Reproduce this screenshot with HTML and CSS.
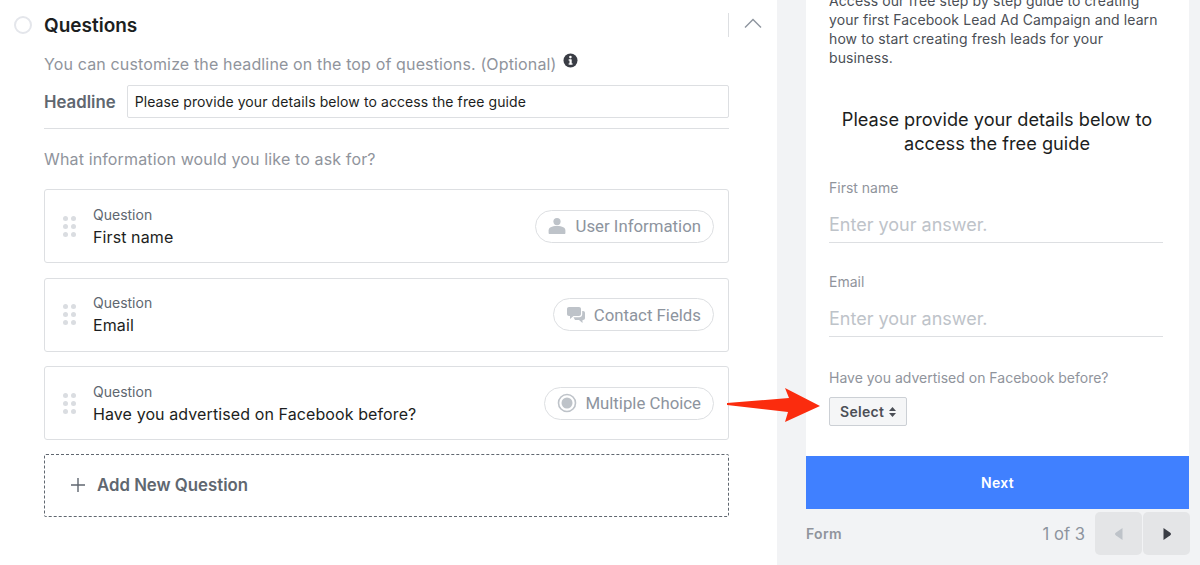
FILE: index.html
```html
<!DOCTYPE html>
<html lang="en">
<head>
    <meta charset="UTF-8">
    <meta name="viewport" content="width=device-width, initial-scale=1.0">
    <title>Lead Form - Questions</title>
    <link rel="stylesheet" href="styles.css">
</head>
<body>

<div class="page">
    <div class="editor">
        <div class="section-head">
            <span class="radio"></span>
            <h2>Questions</h2>
            <span class="head-rule"></span>
            <svg class="chevron" width="18" height="10" viewBox="0 0 18 10"><path d="M1 9.5 9 1.5l8 8" fill="none" stroke="#8d949e" stroke-width="1.4"/></svg>
        </div>

        <div class="section-body">
            <p class="hint hint-top">You can customize the headline on the top of questions. (Optional)
                <svg class="info" width="15" height="15" viewBox="0 0 15 15"><circle cx="7.5" cy="7.5" r="7" fill="#3a3d45"/><rect x="6.5" y="6.4" width="2.2" height="5" fill="#fff"/><rect x="5.6" y="6.4" width="2" height="1.2" fill="#fff"/><rect x="5.6" y="10.4" width="4" height="1.2" fill="#fff"/><circle cx="7.4" cy="4.1" r="1.3" fill="#fff"/></svg>
            </p>
            <div class="headline-row">
                <label for="headline">Headline</label>
                <input type="text" id="headline" value="Please provide your details below to access the free guide">
            </div>
            <p class="hint hint-ask">What information would you like to ask for?</p>

            <div class="question">
                <span class="grip"><i></i><i></i><i></i><i></i><i></i><i></i></span>
                <div class="question-text">
                    <span class="q-label">Question</span>
                    <span class="q-name">First name</span>
                </div>
                <span class="pill">
                    <svg width="20" height="18" viewBox="0 0 20 18"><circle cx="9" cy="4.6" r="3.6" fill="#bec3c9"/><path d="M.6 16v-2.6c0-2.6 3-4.4 8.4-4.4s8.4 1.8 8.4 4.4V16c0 .6-.4 1-1 1H1.6c-.6 0-1-.4-1-1z" fill="#bec3c9"/></svg>
                    User Information
                </span>
            </div>

            <div class="question">
                <span class="grip"><i></i><i></i><i></i><i></i><i></i><i></i></span>
                <div class="question-text">
                    <span class="q-label">Question</span>
                    <span class="q-name">Email</span>
                </div>
                <span class="pill">
                    <svg width="20" height="18" viewBox="0 0 20 18"><path d="M3 1h10c1.2 0 2 .8 2 2v5c0 1.2-.8 2-2 2H7.5L4 13v-3H3c-1.2 0-2-.8-2-2V3c0-1.2.8-2 2-2z" fill="#bec3c9"/><path d="M16.2 5H17c1.2 0 2 .8 2 2v5c0 1.2-.8 2-2 2h-.5v3l-3.5-3H9l-1.5-2.8h5.7c1.7 0 3-1.3 3-3z" fill="#bec3c9"/></svg>
                    Contact Fields
                </span>
            </div>

            <div class="question">
                <span class="grip"><i></i><i></i><i></i><i></i><i></i><i></i></span>
                <div class="question-text">
                    <span class="q-label">Question</span>
                    <span class="q-name">Have you advertised on Facebook before?</span>
                </div>
                <span class="pill">
                    <svg width="20" height="20" viewBox="0 0 20 20"><circle cx="10" cy="10" r="8.5" fill="none" stroke="#bec3c9" stroke-width="1.6"/><circle cx="10" cy="10" r="5.5" fill="#bec3c9"/></svg>
                    Multiple Choice
                </span>
            </div>

            <div class="add-question">
                <svg width="14" height="14" viewBox="0 0 14 14"><path d="M7 0v14M0 7h14" stroke="#606770" stroke-width="1.4"/></svg>
                <span>Add New Question</span>
            </div>
        </div>
    </div>

    <div class="preview">
        <div class="form-card">
            <p class="intro">Access our free step by step guide to creating your first Facebook Lead Ad Campaign and learn how to start creating fresh leads for your business.</p>
            <h3>Please provide your details below to access the free guide</h3>

            <div class="field">
                <span class="field-label">First name</span>
                <span class="field-input">Enter your answer.</span>
            </div>
            <div class="field">
                <span class="field-label">Email</span>
                <span class="field-input">Enter your answer.</span>
            </div>
            <div class="field field-select">
                <span class="field-label">Have you advertised on Facebook before?</span>
                <span class="select-btn">Select
                    <svg width="7" height="10" viewBox="0 0 7 10"><path d="M3.5 0 7 4H0zM3.5 10 0 6h7z" fill="#4b4f56"/></svg>
                </span>
            </div>
        </div>
        <div class="next-btn">Next</div>
        <div class="pager">
            <span class="pager-title">Form</span>
            <span class="pager-count">1 of 3</span>
            <span class="pager-btn">
                <svg width="8" height="12" viewBox="0 0 8 12"><path d="M7.5 0v12L1 7.5C.3 7 0 6.500 0 6s.3-1 1-1.5z" fill="#bec3c9"/></svg>
            </span>
            <span class="pager-btn">
                <svg width="8" height="12" viewBox="0 0 8 12"><path d="M.5 0v12L7 7.5c.7-.5 1-1 1-1.5s-.3-1-1-1.500z" fill="#3a3d45"/></svg>
            </span>
        </div>
    </div>

    <!-- callout arrow over the two panels -->
    <svg class="callout" width="94" height="36" viewBox="0 0 94 36"><path d="M0 15 62 10 58 0l35 18-35 16 3-10L0 17z" fill="#fb2c0e"/></svg>
</div>

</body>
</html>
```

FILE: styles.css
```css
* {
    box-sizing: border-box;
}
html, body {
    margin: 0;
    height: 100%;
    overflow: hidden;
}
body {
    font-family: Inter, "Liberation Sans", sans-serif;
    background: #fff;
}
p, h2, h3 {
    margin: 0;
}
.page {
    position: relative;
    display: flex;
    height: 565px;
}
.editor {
    width: 777px;
    flex-shrink: 0;
    background: #fff;
}
.section-head {
    display: flex;
    align-items: center;
    height: 24px;
    margin-top: 13px;
    padding-left: 14px;
}
.radio {
    width: 18px;
    height: 18px;
    border: 2px solid #e4e6eb;
    border-radius: 50%;
}
.section-head h2 {
    margin-left: 12px;
    font-size: 19px;
    font-weight: 600;
    color: #1c1e21;
}
.head-rule {
    width: 1px;
    height: 24px;
    margin-left: auto;
    background: #dddfe2;
}
.chevron {
    margin: -4px 15px 0 15px;
}
.section-body {
    width: 685px;
    margin-left: 44px;
}
.hint {
    font-size: 16px;
    line-height: 20px;
    letter-spacing: .14px;
    color: #90949c;
}
.hint-top {
    margin-top: 16px;
}
.info {
    margin-left: 2px;
    vertical-align: 2px;
}
.headline-row {
    display: flex;
    align-items: center;
    gap: 11px;
    height: 54px;
    margin-top: 1px;
    padding: 10px 0;
    border-bottom: 1px solid #dddfe2;
}
.headline-row label {
    font-size: 16.8px;
    font-weight: 600;
    color: #606770;
}
.headline-row input {
    flex: 1;
    height: 33px;
    padding: 0 7px;
    border: 1px solid #dddfe2;
    border-radius: 2px;
    font-family: inherit;
    font-size: 14px;
    letter-spacing: .09px;
    color: #1c1e21;
}
.hint-ask {
    margin-top: 20px;
    margin-bottom: 20px;
}
.question {
    display: flex;
    align-items: center;
    height: 74px;
    margin-bottom: 14.5px;
    padding: 0 14px 0 18px;
    border: 1px solid #dddfe2;
    border-radius: 3px;
}
.grip {
    display: grid;
    grid-template-columns: 5px 5px;
    gap: 3px;
    margin-right: 17px;
}
.grip i {
    width: 5px;
    height: 5px;
    border-radius: 50%;
    background: #dadde1;
}
.question-text {
    display: flex;
    flex-direction: column;
    gap: 4px;
}
.q-label {
    font-size: 14px;
    line-height: 17px;
    color: #606770;
}
.q-name {
    font-size: 16px;
    line-height: 20px;
    letter-spacing: .1px;
    color: #1c1e21;
}
.pill {
    display: flex;
    align-items: center;
    gap: 8px;
    height: 33px;
    margin-left: auto;
    padding: 0 12px;
    border: 1px solid #dddfe2;
    border-radius: 17px;
    font-family: Roboto, sans-serif;
    font-size: 16.8px;
    color: #8d949e;
}
.add-question {
    display: flex;
    align-items: center;
    gap: 12px;
    height: 63px;
    margin-top: -1px;
    padding-left: 26px;
    border: 1px dashed #606770;
    border-radius: 2px;
    font-size: 16.8px;
    font-weight: 600;
    color: #606770;
}
.preview {
    flex: 1;
    padding: 0 11px 0 29px;
    background: #f2f3f5;
}
.form-card {
    height: 456px;
    padding: 0 26px 0 23px;
    background: #fff;
    overflow: hidden;
}
.intro {
    margin-top: -9px;
    font-size: 14px;
    line-height: 19px;
    letter-spacing: .1px;
    color: #4b4f56;
}
.form-card h3 {
    margin-top: 40px;
    padding-left: 2px;
    font-size: 18.2px;
    font-weight: 400;
    line-height: 24px;
    text-align: center;
    color: #1c1e21;
}
.field {
    margin-top: 29px;
}
.form-card h3 + .field {
    margin-top: 23px;
}
.field-label {
    display: block;
    font-size: 14px;
    line-height: 19px;
    color: #90949c;
}
.field-input {
    display: block;
    height: 36px;
    margin-top: 10px;
    padding-top: 7px;
    border-bottom: 1px solid #dddfe2;
    font-size: 18px;
    color: #bec3c9;
}
.field-select {
    margin-top: 31px;
}
.select-btn {
    display: inline-flex;
    align-items: center;
    gap: 5px;
    height: 29px;
    margin-top: 10px;
    padding: 0 10px;
    background: #f5f6f7;
    border: 1px solid #ccd0d5;
    border-radius: 2px;
    font-size: 14px;
    font-weight: 600;
    letter-spacing: .3px;
    color: #4b4f56;
}
.next-btn {
    height: 53px;
    line-height: 53px;
    background: #4080ff;
    text-align: center;
    font-size: 14px;
    font-weight: 600;
    letter-spacing: .3px;
    color: #fff;
}
.pager {
    display: flex;
    align-items: center;
    margin-top: 3px;
    margin-right: -1px;
}
.pager-title {
    font-size: 14px;
    font-weight: 600;
    letter-spacing: .3px;
    color: #90949c;
}
.pager-count {
    margin-left: auto;
    margin-right: 9px;
    font-size: 16.6px;
    color: #8d949e;
}
.pager-btn {
    display: flex;
    align-items: center;
    justify-content: center;
    width: 47px;
    height: 43px;
    margin-left: 1px;
    background: #e4e5e7;
    border-radius: 5px;
}
.callout {
    position: absolute;
    left: 727px;
    top: 388px;
}
```
